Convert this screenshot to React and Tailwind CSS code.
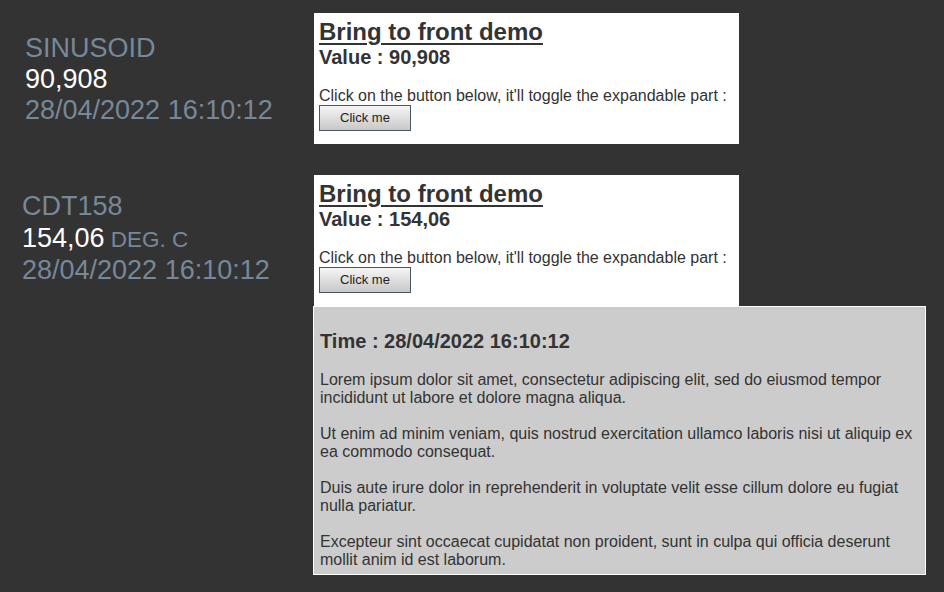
import { useState } from 'react'

// Tag display with a "bring to front" expandable card
const TagRow = ({ name, value, unit, time, leftPad, textTop, leading, expanded, onToggle, className = '' }) => (
  <div className={`flex items-start ${className}`}>
    <div className={`w-[314px] shrink-0 text-[27px] ${leading} ${leftPad} ${textTop}`}>
      <div className="text-[#778899]">{name}</div>
      <div className="text-white">
        {value}
        {unit && <span className="text-[22.5px] text-[#778899]"> {unit}</span>}
      </div>
      <div className="text-[#778899]">{time}</div>
    </div>

    <div className="relative">
      <div className="w-[425px] h-[131px] bg-white px-[5px] pt-[5px] text-[#333]">
        <h2 className="text-[24px] font-bold leading-[1.15] underline decoration-2 underline-offset-[3px]">
          Bring to front demo
        </h2>
        <h3 className="text-[20px] font-bold leading-[1.15]">Value : {value}</h3>
        <p className="mt-[18px] text-[16px] leading-[1.15]">
          Click on the button below, it'll toggle the expandable part :
        </p>
        <button
          onClick={onToggle}
          className="w-[92px] h-[26px] border border-[#4a5561] bg-gradient-to-b from-[#f6f6f6] to-[#c8c8c8] text-[13px] leading-none text-[#222]"
        >
          Click me
        </button>
      </div>

      {/* Expandable part, drawn over the page */}
      {expanded && (
        <div className="absolute top-full left-[-1px] z-10 w-[613px] border border-white bg-[#cccccc] px-[6px] pt-[23px] pb-[4px] text-[#333] text-[16px] leading-[1.15]">
          <h3 className="text-[20px] font-bold leading-[1.15] mb-[18px]">Time : {time}</h3>
          <p className="mb-[17.2px]">
            Lorem ipsum dolor sit amet, consectetur adipiscing elit, sed do eiusmod tempor incididunt ut labore et dolore magna aliqua.
          </p>
          <p className="mb-[17.2px]">
            Ut enim ad minim veniam, quis nostrud exercitation ullamco laboris nisi ut aliquip ex ea commodo consequat.
          </p>
          <p className="mb-[17.2px]">
            Duis aute irure dolor in reprehenderit in voluptate velit esse cillum dolore eu fugiat nulla pariatur.
          </p>
          <p>
            Excepteur sint occaecat cupidatat non proident, sunt in culpa qui officia deserunt mollit anim id est laborum.
          </p>
        </div>
      )}
    </div>
  </div>
)

const App = () => {
  const [open, setOpen] = useState({ sinusoid: false, cdt: true })

  return (
    <div className="min-h-screen bg-[#333333] pt-[13px] font-['Liberation_Sans',Arial,sans-serif]">
      <TagRow
        name="SINUSOID"
        value="90,908"
        time="28/04/2022 16:10:12"
        leftPad="pl-[25px]"
        textTop="pt-[20px]"
        leading="leading-[31px]"
        expanded={open.sinusoid}
        onToggle={() => setOpen(o => ({ ...o, sinusoid: !o.sinusoid }))}
      />
      <TagRow
        className="mt-[31px]"
        name="CDT158"
        value="154,06"
        unit="DEG. C"
        time="28/04/2022 16:10:12"
        leftPad="pl-[22px]"
        textTop="pt-[16px]"
        leading="leading-[31.5px]"
        expanded={open.cdt}
        onToggle={() => setOpen(o => ({ ...o, cdt: !o.cdt }))}
      />
    </div>
  )
}

export default App
